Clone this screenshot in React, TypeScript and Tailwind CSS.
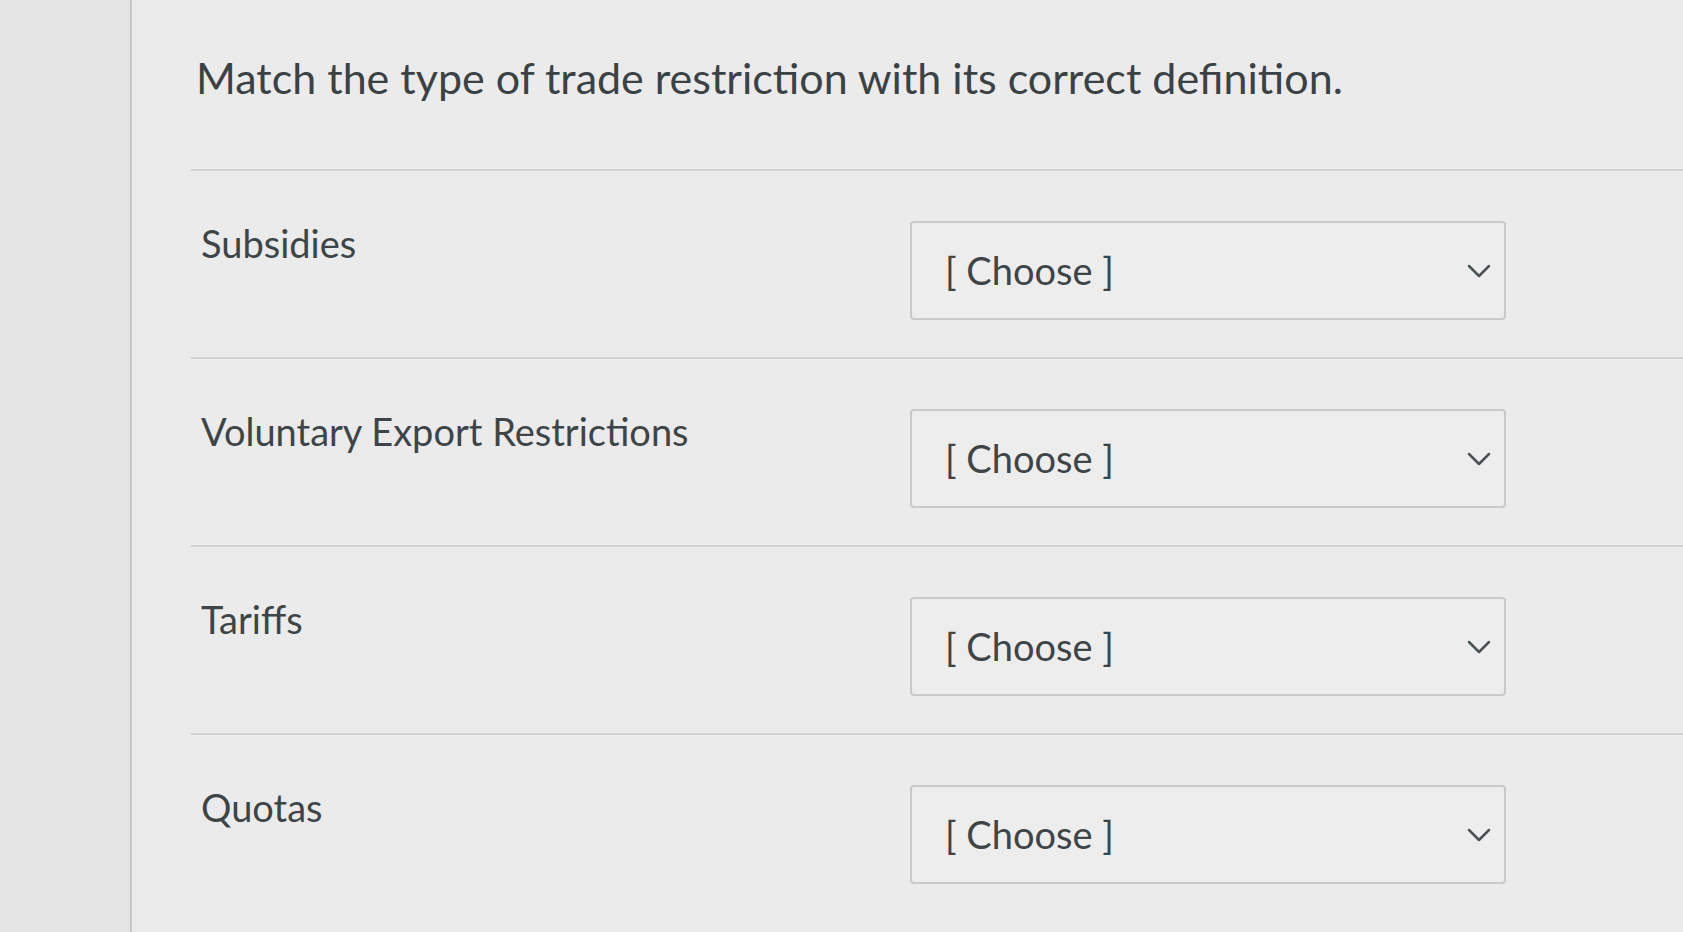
const rows = ["Subsidies", "Voluntary Export Restrictions", "Tariffs", "Quotas"];

function ChoiceRow({ label }: { label: string }) {
  return (
    <div className="flex border-t-2 border-[#d2d2d2] pt-[50px] pb-[37px]">
      <div className="w-[719px] shrink-0 pl-[10px] text-[38px] leading-[44px] text-[#3d4548]">
        {label}
      </div>
      <div className="flex h-[99px] w-[596px] items-center justify-between rounded-[4px] border-2 border-[#c9c9c9] bg-[#ededed] pl-[33px] pr-[12px]">
        <span className="text-[38px] text-[#3d4548]">[ Choose ]</span>
        <svg width="26" height="16" viewBox="0 0 26 16" fill="none">
          <path d="M3 3l10 10 10-10" stroke="#4a5256" strokeWidth="2.5" strokeLinecap="round" strokeLinejoin="round" />
        </svg>
      </div>
    </div>
  );
}

export default function App() {
  return (
    <div
      className="flex h-[932px] w-[1683px] overflow-hidden bg-[#ebebeb]"
      style={{ fontFamily: "Lato, 'Open Sans', sans-serif" }}
    >
      {/* left rail */}
      <div className="w-[132px] shrink-0 border-r-2 border-[#c9c9c9] bg-[#e4e4e4]" />

      <div className="flex-1 pl-[59px] pt-[48px]">
        <h1 className="mb-[61px] pl-[5px] text-[43px] leading-[60px] text-[#3a4245]">
          Match the type of trade restriction with its correct definition.
        </h1>
        <div className="flex flex-col">
          {rows.map((r) => (
            <ChoiceRow key={r} label={r} />
          ))}
        </div>
      </div>
    </div>
  );
}
